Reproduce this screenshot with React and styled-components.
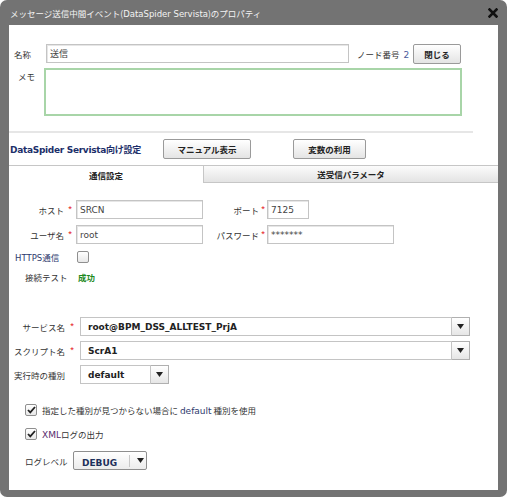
import React from 'react';
import styled, { createGlobalStyle } from 'styled-components';

const GlobalStyle = createGlobalStyle`
  html, body { margin: 0; padding: 0; background: #ffffff; }
  body { font-family: "Noto Sans CJK JP", "DejaVu Sans", sans-serif; font-size: 8.5px; color: #333; }
  * { box-sizing: border-box; }
`;

const Dialog = styled.div`
  width: 507px;
  height: 497px;
  background: #737373;
  border-radius: 7px;
  display: flex;
  flex-direction: column;
  overflow: hidden;
`;

const TitleBar = styled.div`
  height: 25px;
  display: flex;
  align-items: center;
  justify-content: space-between;
  padding: 0 9px 0 10px;
  color: #f4f4f4;
  font-size: 8.5px;
`;

const Body = styled.div`
  margin: 0 9px 7px 9px;
  height: 465px;
  background: #fff;
`;

const Row = styled.div`
  display: flex;
  align-items: ${(p) => p.$align || 'center'};
  margin-top: ${(p) => p.$top || 0}px;
  padding-left: ${(p) => p.$left || 0}px;
  height: ${(p) => p.$h || 19}px;
`;

const Label = styled.span`
  width: ${(p) => p.$w}px;
  margin-left: ${(p) => p.$ml || 0}px;
  text-align: ${(p) => p.$right ? 'right' : 'left'};
  color: ${(p) => p.$color || '#333'};
  flex-shrink: 0;
  white-space: nowrap;
  padding-top: ${(p) => p.$pt || 0}px;
`;

const Req = styled.span`
  color: #e8363a;
  width: ${(p) => p.$w}px;
  text-align: center;
  flex-shrink: 0;
  font-size: 10px;
`;

const TextBox = styled.div`
  width: ${(p) => p.$w}px;
  height: ${(p) => p.$h || 19}px;
  border: 1px solid #c4c4c4;
  box-shadow: inset 1px 1px 0 #e6e6e6;
  margin-left: ${(p) => p.$ml || 0}px;
  padding: 2px 0 0 ${(p) => p.$pl || 3}px;
  color: #444;
  font-family: "DejaVu Sans", "Noto Sans CJK JP", sans-serif;
  font-size: 9px;
  flex-shrink: 0;
  line-height: 14px;
`;

const MemoBox = styled.div`
  width: 418px;
  height: 48px;
  border: 2px solid #a8d5a8;
  flex-shrink: 0;
`;

const Button = styled.div`
  width: ${(p) => p.$w}px;
  height: 20px;
  margin-left: ${(p) => p.$ml || 0}px;
  border: 1px solid #9a9a9a;
  border-radius: 2px;
  background: linear-gradient(#ffffff, #e4e4e4);
  display: flex;
  align-items: center;
  justify-content: center;
  font-weight: bold;
  color: #222;
  flex-shrink: 0;
`;

const NodeNo = styled.span`
  margin-left: 8px;
  width: 56px;
  color: #333;
  white-space: nowrap;
  b { color: #4a5a9a; font-weight: normal; font-family: "DejaVu Sans", sans-serif; margin-left: 4px; font-size: 9px; }
`;

const Separator = styled.div`
  margin-top: 15px;
  width: 464px;
  height: 2px;
  background: #e6e6e6;
`;

const SectionTitle = styled.span`
  width: 154px;
  padding-left: 1px;
  color: #1c2f6a;
  font-weight: bold;
  font-size: 9px;
  font-family: "DejaVu Sans", "Noto Sans CJK JP", sans-serif;
  letter-spacing: -0.3px;
  white-space: nowrap;
  flex-shrink: 0;
`;

const Tabs = styled.div`
  margin-top: 6px;
  display: flex;
  height: 18px;
  border-top: 1px solid #c6c6c6;
`;

const Tab = styled.div`
  width: ${(p) => p.$w}px;
  display: flex;
  align-items: center;
  justify-content: center;
  font-weight: bold;
  color: #222;
  background: ${(p) => p.$active ? '#fff' : 'linear-gradient(#fbfbfb, #e3e3e3)'};
  border-left: ${(p) => p.$active ? 'none' : '1px solid #c6c6c6'};
  border-bottom: ${(p) => p.$active ? 'none' : '1px solid #c6c6c6'};
`;

const Check = styled.div`
  width: 12px;
  height: 12px;
  border: 1px solid #8f8f8f;
  border-radius: 2px;
  background: linear-gradient(#ffffff, #e8e8e8);
  display: flex;
  align-items: center;
  justify-content: center;
  flex-shrink: 0;
`;

const Success = styled.span`
  color: #1e8a1e;
  font-weight: bold;
`;

const Combo = styled.div`
  display: flex;
  margin-left: ${(p) => p.$ml || 0}px;
  height: 19px;
  flex-shrink: 0;
`;

const ComboValue = styled.div`
  width: ${(p) => p.$w}px;
  height: 19px;
  border: 1px solid #c4c4c4;
  padding: 0 0 0 7px;
  display: flex;
  align-items: center;
  font-weight: bold;
  font-family: "DejaVu Sans", sans-serif;
  font-size: 9px;
  color: #222;
`;

const ComboArrow = styled.div`
  width: 18px;
  height: 19px;
  border: 1px solid #b0b0b0;
  border-left: none;
  background: linear-gradient(#ffffff, #e6e6e6);
  display: flex;
  align-items: center;
  justify-content: center;
`;

const LevelSelect = styled.div`
  width: 74px;
  height: 19px;
  border: 1px solid #8e8e8e;
  border-radius: 2px;
  background: linear-gradient(#ffffff, #ececec);
  display: flex;
  align-items: center;
  font-family: "DejaVu Sans", sans-serif;
  font-weight: bold;
  font-size: 9px;
  color: #1c2f5a;
`;

const LevelText = styled.span`
  width: 56px;
  padding-left: 8px;
  padding-top: 3px;
  border-right: 1px solid #c8c8c8;
  height: 12px;
  line-height: 10px;
`;

const LevelArrow = styled.span`
  display: flex;
  margin-left: 7px;
`;

const Latin = styled.span`
  font-family: "DejaVu Sans", sans-serif;
  color: ${(p) => p.$color || 'inherit'};
  font-size: ${(p) => p.$size || 9}px;
`;

const Arrow = () => (
  <svg width="7" height="5" viewBox="0 0 7 5">
    <path d="M0 0h7L3.5 5z" fill="#222" />
  </svg>
);

const Tick = () => (
  <svg width="9" height="8" viewBox="0 0 9 8">
    <path d="M1 4l2.3 2.4L8 1" stroke="#222" strokeWidth="1.8" fill="none" />
  </svg>
);

const CloseIcon = () => (
  <svg width="10" height="10" viewBox="0 0 10 10">
    <path d="M1.5 1.5l7 7M8.5 1.5l-7 7" stroke="#111" strokeWidth="2.6" strokeLinecap="square" />
  </svg>
);

export default function App() {
  return (
    <>
      <GlobalStyle />
      <Dialog>
        <TitleBar>
          <span>メッセージ送信中間イベント(<Latin $size={8.5}>DataSpider Servista</Latin>)のプロパティ</span>
          <CloseIcon />
        </TitleBar>
        <Body>
          <Row $top={19} $left={5}>
            <Label $w={32}>名称</Label>
            <TextBox $w={303}>送信</TextBox>
            <NodeNo>ノード番号<b>2</b></NodeNo>
            <Button $w={48}>閉じる</Button>
          </Row>
          <Row $top={5} $left={9} $h={48} $align="flex-start">
            <Label $w={26} $pt={2}>メモ</Label>
            <MemoBox />
          </Row>
          <Separator />
          <Row $top={6} $h={20}>
            <SectionTitle>DataSpider Servista向け設定</SectionTitle>
            <Button $w={88}>マニュアル表示</Button>
            <Button $w={73} $ml={42}>変数の利用</Button>
          </Row>
          <Tabs>
            <Tab $w={194} $active>通信設定</Tab>
            <Tab $w={295}>送受信パラメータ</Tab>
          </Tabs>
          <Row $top={17}>
            <Label $w={55} $right>ホスト</Label>
            <Req $w={12}>*</Req>
            <TextBox $w={127}>SRCN</TextBox>
            <Label $w={56} $right>ポート</Label>
            <Req $w={8}>*</Req>
            <TextBox $w={42}>7125</TextBox>
          </Row>
          <Row $top={6}>
            <Label $w={55} $right>ユーザ名</Label>
            <Req $w={12}>*</Req>
            <TextBox $w={127}>root</TextBox>
            <Label $w={56} $right>パスワード</Label>
            <Req $w={8}>*</Req>
            <TextBox $w={127}>*******</TextBox>
          </Row>
          <Row $top={7} $left={6} $h={12}>
            <Label $w={62} $color="#2d3a6e">
              <Latin $size={8.5}>HTTPS</Latin>通信
            </Label>
            <Check />
          </Row>
          <Row $top={7} $left={16} $h={14}>
            <Label $w={53}>接続テスト</Label>
            <Success>成功</Success>
          </Row>
          <Row $top={33}>
            <Label $w={56} $right>サービス名</Label>
            <Req $w={14}>*</Req>
            <Combo $ml={1}>
              <ComboValue $w={372}>root@BPM_DSS_ALLTEST_PrjA</ComboValue>
              <ComboArrow><Arrow /></ComboArrow>
            </Combo>
          </Row>
          <Row $top={5}>
            <Label $w={56} $right>スクリプト名</Label>
            <Req $w={14}>*</Req>
            <Combo $ml={1}>
              <ComboValue $w={372}>ScrA1</ComboValue>
              <ComboArrow><Arrow /></ComboArrow>
            </Combo>
          </Row>
          <Row $top={5} $left={5}>
            <Label $w={66}>実行時の種別</Label>
            <Combo>
              <ComboValue $w={71}>default</ComboValue>
              <ComboArrow><Arrow /></ComboArrow>
            </Combo>
          </Row>
          <Row $top={20} $left={16} $h={12}>
            <Check><Tick /></Check>
            <Label $w={300} $ml={5}>
              指定した種別が見つからない場合に <Latin $color="#2d3a6e">default</Latin> 種別を使用
            </Label>
          </Row>
          <Row $top={12} $left={16} $h={12}>
            <Check><Tick /></Check>
            <Label $w={200} $ml={5}>
              <Latin $color="#5a2d6e">XML</Latin>ログの出力
            </Label>
          </Row>
          <Row $top={11} $left={16}>
            <Label $w={48}>ログレベル</Label>
            <LevelSelect>
              <LevelText>DEBUG</LevelText>
              <LevelArrow><Arrow /></LevelArrow>
            </LevelSelect>
          </Row>
        </Body>
      </Dialog>
    </>
  );
}
